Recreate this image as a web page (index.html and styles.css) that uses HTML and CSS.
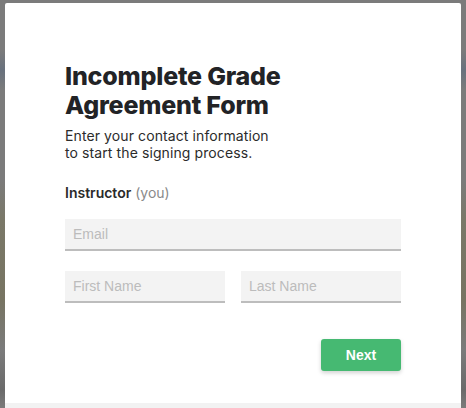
FILE: index.html
```html
<!DOCTYPE html>
<html>
<head>
<meta charset="utf-8">
<link rel="stylesheet" href="styles.css">
</head>
<body>
<div class="backdrop">
  <div class="modal">
    <div class="content">
      <h1 class="title">Incomplete Grade<br>Agreement Form</h1>
      <p class="subtitle">Enter your contact information<br>to start the signing process.</p>
      <div class="label"><span class="label-strong">Instructor</span> <span class="label-muted">(you)</span></div>
      <input class="field" type="text" placeholder="Email">
      <div class="row">
        <input class="field" type="text" placeholder="First Name">
        <input class="field" type="text" placeholder="Last Name">
      </div>
      <div class="actions">
        <button class="btn-next">Next</button>
      </div>
    </div>
    <div class="footer"></div>
  </div>
</div>
</body>
</html>
```
FILE: styles.css
```css
html, body {
  margin: 0;
  padding: 0;
  height: 408px;
  overflow: hidden;
}
body {
  background:
    linear-gradient(to bottom, rgba(122,122,122,0) 0, rgba(70,90,120,0.0) 50px, rgba(70,95,130,0.35) 70px, rgba(122,122,122,0) 90px),
    linear-gradient(to bottom, #7b7b7b 0, #7b7b7b 180px, #7a7868 220px, #777462 300px, #7b7b7b 350px, #6a6a6a 390px, #7b7b7b 408px);
}
.backdrop {
  padding: 3px 5px 0 5px;
}
.modal {
  background: #ffffff;
  border-radius: 2px 2px 0 0;
  width: 456px;
  height: 420px;
  display: flex;
  flex-direction: column;
}
.content {
  padding: 59px 60px 0 60px;
  height: 341px;
  font-family: "Inter", "Liberation Sans", sans-serif;
}
.title {
  margin: 0;
  font-size: 25px;
  line-height: 29px;
  font-weight: 800;
  color: #222326;
  letter-spacing: -0.2px;
}
.subtitle {
  margin: 7px 0 0 0;
  font-size: 14px;
  line-height: 17px;
  color: #2b2b2b;
  letter-spacing: 0.1px;
}
.label {
  margin-top: 23px;
  font-size: 14px;
  line-height: 18px;
  color: #333;
}
.label-strong {
  font-weight: 600;
  color: #2a2a2a;
}
.label-muted {
  color: #8a8a8a;
}
.field {
  display: block;
  box-sizing: border-box;
  width: 336px;
  height: 32px;
  margin: 17px 0 0 0;
  padding: 0 8px;
  border: none;
  border-bottom: 2px solid #bdbdbd;
  background: #f3f3f3;
  font-family: "Liberation Sans", Arial, sans-serif;
  font-size: 14px;
  color: #333;
  outline: none;
}
.field::placeholder {
  color: #bcbcbc;
}
.row {
  display: flex;
  gap: 16px;
  margin-top: 20px;
}
.row .field {
  width: 160px;
  margin: 0;
}
.actions {
  display: flex;
  justify-content: flex-end;
  margin-top: 36px;
}
.btn-next {
  width: 80px;
  height: 32px;
  border: none;
  border-radius: 3px;
  background: #46b972;
  color: #ffffff;
  font-family: "Liberation Sans", Arial, sans-serif;
  font-weight: 700;
  font-size: 14px;
  box-shadow: 0 2px 4px rgba(0,0,0,0.18);
  cursor: pointer;
}
.footer {
  flex: 1;
  background: #f2f2f2;
}
```
